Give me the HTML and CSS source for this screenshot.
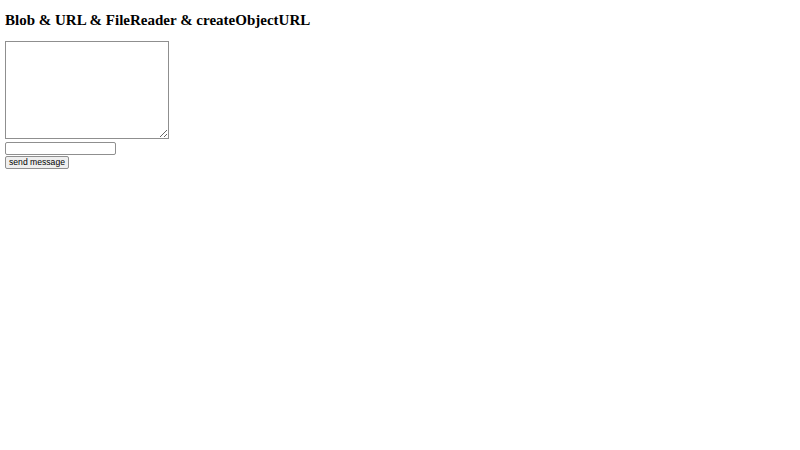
FILE: index.html
```html
<!DOCTYPE html>
<html>
<head>
<meta charset="utf-8">
<link rel="stylesheet" href="styles.css">
</head>
<body>
<h1 class="title">Blob &amp; URL &amp; FileReader &amp; createObjectURL</h1>
<div class="chat">
<textarea class="log"></textarea>
<input class="msg" type="text">
<button class="send">send message</button>
</div>
</body>
</html>
```

FILE: styles.css
```css
body {
  margin: 5px;
  font-family: "Liberation Serif", serif;
  background: #fff;
  color: #000;
}
.title {
  font-size: 15px;
  font-weight: bold;
  margin: 7px 0 12px;
  line-height: 17px;
}
.chat {
  display: flex;
  flex-direction: column;
  align-items: flex-start;
}
.log {
  box-sizing: border-box;
  width: 164px;
  height: 98px;
  margin: 0 0 3px;
  border: 1px solid #8f8f8f;
  padding: 2px;
}
.msg {
  box-sizing: border-box;
  width: 111px;
  height: 13px;
  margin: 0 0 1px;
  padding: 0 2px;
  border: 1px solid #8f8f8f;
  border-radius: 2px;
  font-size: 8px;
}
.send {
  box-sizing: border-box;
  width: 64px;
  height: 13px;
  margin: 0;
  padding: 0 3px;
  font-family: "Liberation Sans", Arial, sans-serif;
  font-size: 8.6px;
  line-height: 11px;
  border: 1px solid #8f8f8f;
  border-radius: 2px;
  background: #efefef;
  color: #000;
  white-space: nowrap;
}
```
